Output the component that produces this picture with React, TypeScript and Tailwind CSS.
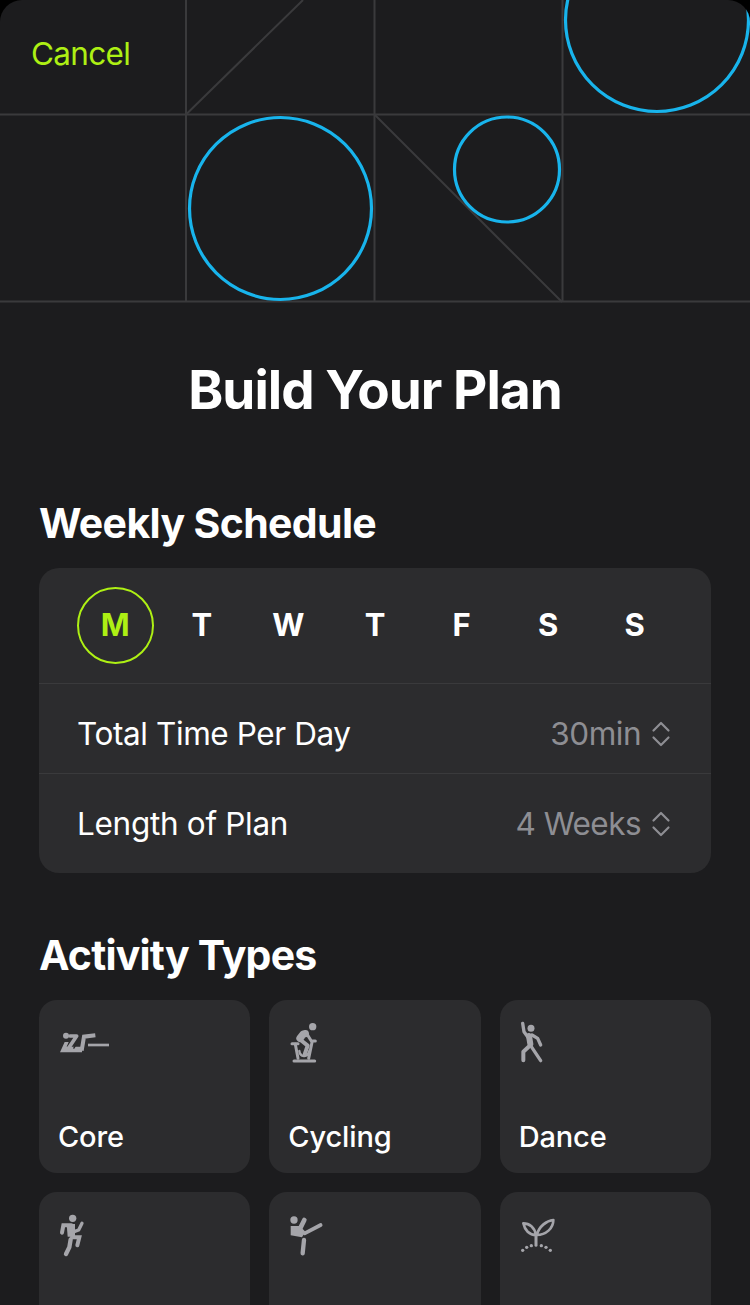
const days = ["M", "T", "W", "T", "F", "S", "S"];

function HeroPattern() {
  return (
    <svg width="750" height="303" viewBox="0 0 750 303" fill="none" className="block">
      <g stroke="#3a3a3c" strokeWidth="2">
        <path d="M186 0V302M374.500 0V302M562.500 0V302M0 114.500H750M0 301.500H750" />
        <path d="M186.500 114L303 0M374.500 114.500L562 302" />
      </g>
      <g stroke="#18b4ec" strokeWidth="3.200">
        <circle cx="280.500" cy="208.500" r="91" />
        <circle cx="507" cy="169.500" r="52.500" />
        <circle cx="657" cy="20" r="91.500" />
      </g>
    </svg>
  );
}

function Chevrons() {
  return (
    <svg width="20" height="28" viewBox="0 0 20 28" fill="none" stroke="#8e8e93" strokeWidth="2.200" strokeLinecap="round" strokeLinejoin="round">
      <path d="M2.500 10.500L10 3L17.500 10.500" />
      <path d="M2.500 17.500L10 25L17.500 17.500" />
    </svg>
  );
}

// icons are traced at 3x, so the viewBox numbers are 3 times the drawn size
function CoreIcon() {
  return (
    <svg width="55" height="45" viewBox="27 0 165 135" fill="none" stroke="#a5a5aa" strokeLinecap="round" strokeLinejoin="round">
      <circle cx="48" cy="47" r="9" fill="#a5a5aa" stroke="none" />
      <path d="M30 97L44 66H56L50 80H96V97Z" fill="#a5a5aa" stroke="none" />
      <path d="M60 48H80L56 84" strokeWidth="11" />
      <path d="M84 60L72 84" stroke="#2c2c2e" strokeWidth="5" />
      <path d="M95 92L102 50L136 46" strokeWidth="12" strokeLinejoin="miter" strokeLinecap="butt" />
      <path d="M114 75H177" strokeWidth="8" strokeLinecap="butt" />
    </svg>
  );
}

function CyclingIcon() {
  return (
    <svg width="40" height="45" viewBox="57 45 120 135" fill="none" stroke="#a5a5aa" strokeLinecap="round" strokeLinejoin="round">
      <circle cx="128" cy="65" r="11" fill="#a5a5aa" stroke="none" />
      <path d="M90 100L100 87L106 86" strokeWidth="22" />
      <path d="M110 86L124 108L136 108" strokeWidth="9" />
      <path d="M92 105L113 122L104 148" strokeWidth="12" />
      <path d="M66 116H84" strokeWidth="9" />
      <path d="M76 118L84 160" strokeWidth="9" />
      <path d="M126 112L116 160" strokeWidth="9" />
      <path d="M88 138C90 156 112 160 118 138" strokeWidth="7" />
      <path d="M72 168H134" strokeWidth="9" />
    </svg>
  );
}

function DanceIcon() {
  return (
    <svg width="30" height="45" viewBox="90 60 90 135" fill="none" stroke="#a5a5aa" strokeLinecap="round" strokeLinejoin="round">
      <circle cx="123" cy="85" r="10.500" fill="#a5a5aa" stroke="none" />
      <path d="M98 70L102 95L114 112" strokeWidth="10" />
      <path d="M117 108L121 132" strokeWidth="18" />
      <path d="M126 105L143 115L152 135" strokeWidth="10" />
      <path d="M116 140L100 155V181" strokeWidth="12" />
      <path d="M124 140L152 182" strokeWidth="10" />
    </svg>
  );
}

function RunIcon() {
  return (
    <svg width="30" height="45" viewBox="87 66 90 135" fill="none" stroke="#a5a5aa" strokeLinecap="round" strokeLinejoin="round">
      <circle cx="128" cy="85" r="11" fill="#a5a5aa" stroke="none" />
      <path d="M96 128L100 106H124" strokeWidth="12" strokeLinejoin="miter" />
      <path d="M110 102H135V140H113Z" fill="#a5a5aa" stroke="none" />
      <path d="M132 125L146 120L156 100" strokeWidth="10" />
      <path d="M126 142H148L142 166" strokeWidth="12" strokeLinejoin="miter" />
      <path d="M122 148L118 172L108 192" strokeWidth="13" />
    </svg>
  );
}

function KickIcon() {
  return (
    <svg width="35" height="45" viewBox="87 66 105 135" fill="none" stroke="#a5a5aa" strokeLinecap="round" strokeLinejoin="round">
      <circle cx="102" cy="90" r="11" fill="#a5a5aa" stroke="none" />
      <path d="M92 108H120L136 125L126 142L92 136Z" fill="#a5a5aa" stroke="none" />
      <path d="M122 112L133 90" strokeWidth="14" />
      <path d="M134 130L182 105" strokeWidth="11" />
      <path d="M132 150L128 190" strokeWidth="13" />
    </svg>
  );
}

function SproutIcon() {
  return (
    <svg width="35" height="42" viewBox="90 66 105 126" fill="none" stroke="#a5a5aa" strokeLinejoin="round">
      <path d="M138 132V166" strokeWidth="9" strokeLinecap="round" />
      <path d="M138 135C118 135 104 120 100 100C118 100 134 112 138 135Z" strokeWidth="8" />
      <path d="M140 135C148 108 170 92 190 90C190 115 168 135 140 135Z" strokeWidth="8" />
      <g fill="#a5a5aa" stroke="none">
        <circle cx="98" cy="181" r="5" />
        <circle cx="110" cy="172" r="5" />
        <circle cx="124" cy="167" r="5" />
        <circle cx="154" cy="167" r="5" />
        <circle cx="168" cy="172" r="5" />
        <circle cx="181" cy="181" r="5" />
      </g>
    </svg>
  );
}

function ActivityCard({ icon, label }: { icon: React.ReactNode; label?: string }) {
  return (
    <div className="flex h-[173px] flex-col justify-between rounded-[18px] bg-[#2c2c2e] pt-[20px] pb-[19px] pl-[20px]">
      <div className="flex h-[45px] items-start">{icon}</div>
      {label && <div className="-ml-px text-[29px] leading-[34px] font-medium tracking-[-0.15px] text-white">{label}</div>}
    </div>
  );
}

export default function App() {
  return (
    <div className="h-[1305px] w-[750px] overflow-hidden bg-black font-['Inter','Liberation_Sans',sans-serif]">
      <div className="h-full overflow-hidden rounded-t-[22px] bg-[#1c1c1e]">
        <div className="relative">
          <HeroPattern />
          <button className="absolute top-[34px] left-[31px] text-[31.500px] leading-[40px] tracking-[-0.7px] text-[#aef014]">Cancel</button>
        </div>

        <h1 className="mt-[57px] text-center text-[53px] leading-[60px] font-bold tracking-[-0.95px] text-white">Build Your Plan</h1>

        <div className="mx-[39px] mt-[79px]">
          <h2 className="text-[41px] leading-[48px] font-bold tracking-[-0.65px] text-white">Weekly Schedule</h2>

          <div className="mt-[21px] overflow-hidden rounded-[20px] bg-[#2c2c2e]">
            <div className="grid h-[115px] grid-cols-7 items-center px-[33px]">
              {days.map((day, index) => (
                <div key={index} className="flex justify-center">
                  <div className={`flex size-[77px] items-center justify-center rounded-full text-[31px] font-bold ${index === 0 ? "border-2 border-[#aef014] text-[#aef014]" : "text-white"}`}>
                    {day}
                  </div>
                </div>
              ))}
            </div>
            <div className="flex h-[90px] items-center justify-between border-t border-[#3a3a3c] pt-[11px] pr-[40px] pl-[39px]">
              <span className="-ml-px text-[31.500px] tracking-[-0.4px] text-white">Total Time Per Day</span>
              <span className="flex items-center gap-[10px] text-[31.500px] tracking-[-0.5px] text-[#8e8e93]">30min <Chevrons /></span>
            </div>
            <div className="flex h-[100px] items-center justify-between border-t border-[#3a3a3c] pr-[40px] pl-[39px]">
              <span className="-ml-px text-[31.500px] tracking-[-0.3px] text-white">Length of Plan</span>
              <span className="flex items-center gap-[10px] text-[31.500px] tracking-[-0.55px] text-[#8e8e93]">4 Weeks <Chevrons /></span>
            </div>
          </div>

          <h2 className="mt-[58px] text-[41px] leading-[48px] font-bold tracking-[-0.8px] text-white">Activity Types</h2>

          <div className="mt-[21px] grid grid-cols-3 gap-[19px]">
            <ActivityCard icon={<CoreIcon />} label="Core" />
            <ActivityCard icon={<CyclingIcon />} label="Cycling" />
            <ActivityCard icon={<DanceIcon />} label="Dance" />
            <ActivityCard icon={<RunIcon />} />
            <ActivityCard icon={<KickIcon />} />
            <ActivityCard icon={<SproutIcon />} />
          </div>
        </div>
      </div>
    </div>
  );
}
